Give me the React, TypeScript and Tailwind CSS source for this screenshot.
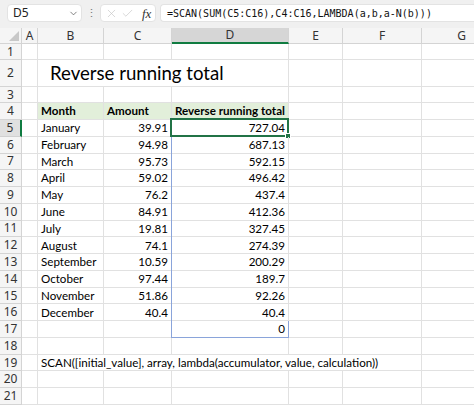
import React from 'react';
import { X, Check, ChevronDown } from 'lucide-react';

const colW = ['w-[66px]', 'w-[68px]', 'w-[117px]', 'w-[54px]', 'w-[79px]', 'w-[80px]'];
const letters = ['B', 'C', 'D', 'E', 'F', 'G'];

const data: [string, string, string][] = [
  ['January', '39.91', '727.04'],
  ['February', '94.98', '687.13'],
  ['March', '95.73', '592.15'],
  ['April', '59.02', '496.42'],
  ['May', '76.2', '437.4'],
  ['June', '84.91', '412.36'],
  ['July', '19.81', '327.45'],
  ['August', '74.1', '274.39'],
  ['September', '10.59', '200.29'],
  ['October', '97.44', '189.7'],
  ['November', '51.86', '92.26'],
  ['December', '40.4', '40.4'],
];

const cellFont = "font-['Lato','Liberation_Sans',sans-serif] text-[11.6px] text-black";
const uiFont = "font-['Noto_Sans','Liberation_Sans',sans-serif] text-[12px]";

interface CellProps {
  w: string;
  className?: string;
  children?: React.ReactNode;
}

const Cell: React.FC<CellProps> = ({ w, className = '', children }) => (
  <div
    className={`${w} shrink-0 h-full border-r border-b border-[#e1e1e1] flex items-center px-[3px] whitespace-nowrap ${className}`}
  >
    {children}
  </div>
);

interface RowProps {
  n: number;
  h: string;
  active?: boolean;
  children?: React.ReactNode;
}

const Row: React.FC<RowProps> = ({ n, h, active, children }) => (
  <div className={`flex ${h}`}>
    <div
      className={`w-[22px] shrink-0 h-full border-b flex items-center justify-center ${uiFont} text-[#333] ${
        active
          ? 'bg-[#e0e0e0] border-r-2 border-r-[#107c41] border-b-[#d0d0d0]'
          : 'bg-[#f5f5f5] border-r border-[#d4d4d4]'
      }`}
    >
      {n}
    </div>
    <Cell w="w-[16px]" />
    {children}
  </div>
);

const EmptyCells: React.FC<{ from: number }> = ({ from }) => (
  <>
    {colW.slice(from).map((w, i) => (
      <Cell key={i} w={w} />
    ))}
  </>
);

const FormulaBar: React.FC = () => (
  <div className="h-[28px] bg-[#f0f0f0] flex items-start pt-[4px] pl-[7px]">
    <div className="w-[75px] h-[18px] bg-white rounded-[4px] border border-[#e3e3e3] flex items-center justify-between pl-[5px] pr-[2px]">
      <span className={`${uiFont} text-[#222]`}>D5</span>
      <ChevronDown size={11} strokeWidth={1.6} className="text-[#555]" />
    </div>
    <div className="w-[18px] h-[18px] flex items-center justify-center text-[#777] text-[11px]">⋮</div>
    <div className="w-[56px] h-[18px] bg-white rounded-[4px] border border-[#e3e3e3] flex items-center pl-[4px] gap-[3px]">
      <X size={13} strokeWidth={1.2} className="text-[#c4c4c4]" />
      <Check size={13} strokeWidth={1.2} className="text-[#c4c4c4]" />
      <span className="font-['Liberation_Serif',serif] italic text-[13px] text-[#333] ml-[5px] leading-none">fx</span>
    </div>
    <div className="ml-[4px] flex-1 h-[18px] bg-white rounded-l-[4px] border border-r-0 border-[#e3e3e3] flex items-center pl-[6px]">
      <span className="font-['DejaVu_Sans_Mono','Liberation_Mono',monospace] text-[10px] text-[#111]">
        =SCAN(SUM(C5:C16),C4:C16,LAMBDA(a,b,a-N(b)))
      </span>
    </div>
  </div>
);

const ColumnHeaders: React.FC = () => (
  <div className="flex h-[16px]">
    <div className="w-[22px] shrink-0 h-full bg-[#f5f5f5] border-r border-b border-[#d4d4d4] relative">
      <svg width="10" height="10" viewBox="0 0 10 10" className="absolute right-[2px] bottom-[2px]">
        <polygon points="10,0 10,10 0,10" fill="#c8c8c8" />
      </svg>
    </div>
    <div className={`w-[16px] shrink-0 h-full bg-[#f5f5f5] border-r border-b border-[#d4d4d4] flex items-center justify-center ${uiFont} text-[#333]`}>
      A
    </div>
    {letters.map((l, i) => (
      <div
        key={l}
        className={`${colW[i]} shrink-0 h-full flex items-center justify-center ${uiFont} text-[#333] ${
          l === 'D'
            ? 'bg-[#d6d6d6] border-r border-[#d4d4d4] border-b-2 border-b-[#107c41]'
            : 'bg-[#f5f5f5] border-r border-b border-[#d4d4d4]'
        }`}
      >
        {l}
      </div>
    ))}
  </div>
);

export default function App() {
  const rowH = 'h-[16.77px]';
  return (
    <div className="w-[474px] h-[406px] overflow-hidden bg-white">
      <FormulaBar />
      <ColumnHeaders />
      <div className={cellFont}>
        <Row n={1} h="h-[16px]">
          <EmptyCells from={0} />
        </Row>
        <Row n={2} h="h-[27px]">
          <Cell w="w-[251px]" className="pl-[12px]">
            <span className="text-[18.6px] leading-none">Reverse running total</span>
          </Cell>
          <EmptyCells from={3} />
        </Row>
        <Row n={3} h="h-[16px]">
          <EmptyCells from={0} />
        </Row>
        <Row n={4} h="h-[17px]">
          <Cell w={colW[0]} className="bg-[#e2efda] font-bold">Month</Cell>
          <Cell w={colW[1]} className="bg-[#e2efda] font-bold">Amount</Cell>
          <Cell w={colW[2]} className="bg-[#e2efda] font-bold">Reverse running total</Cell>
          <EmptyCells from={3} />
        </Row>
        {data.map(([m, amt, rev], i) => (
          <Row key={m} n={i + 5} h={rowH} active={i === 0}>
            <Cell w={colW[0]}>{m}</Cell>
            <Cell w={colW[1]} className="justify-end">{amt}</Cell>
            <Cell w={colW[2]} className="justify-end relative">
              {i === 0 && (
                <>
                  <div className="absolute left-[-1px] top-[-1px] w-[118px] h-[219px] border border-[#8aa4da] pointer-events-none" />
                  <div className="absolute left-[-2px] top-[-2px] w-[119px] h-[19px] border-2 border-[#217346] pointer-events-none">
                    <div className="absolute right-[-4px] bottom-[-4px] w-[6px] h-[6px] bg-[#217346] border border-white" />
                  </div>
                </>
              )}
              <span className="relative">{rev}</span>
            </Cell>
            <EmptyCells from={3} />
          </Row>
        ))}
        <Row n={17} h={rowH}>
          <Cell w={colW[0]} />
          <Cell w={colW[1]} />
          <Cell w={colW[2]} className="justify-end">0</Cell>
          <EmptyCells from={3} />
        </Row>
        <Row n={18} h={rowH}>
          <EmptyCells from={0} />
        </Row>
        <Row n={19} h={rowH}>
          <Cell w="w-[384px]">SCAN([initial_value], array, lambda(accumulator, value, calculation))</Cell>
          <EmptyCells from={5} />
        </Row>
        <Row n={20} h={rowH}>
          <EmptyCells from={0} />
        </Row>
        <Row n={21} h={rowH}>
          <EmptyCells from={0} />
        </Row>
      </div>
    </div>
  );
}
